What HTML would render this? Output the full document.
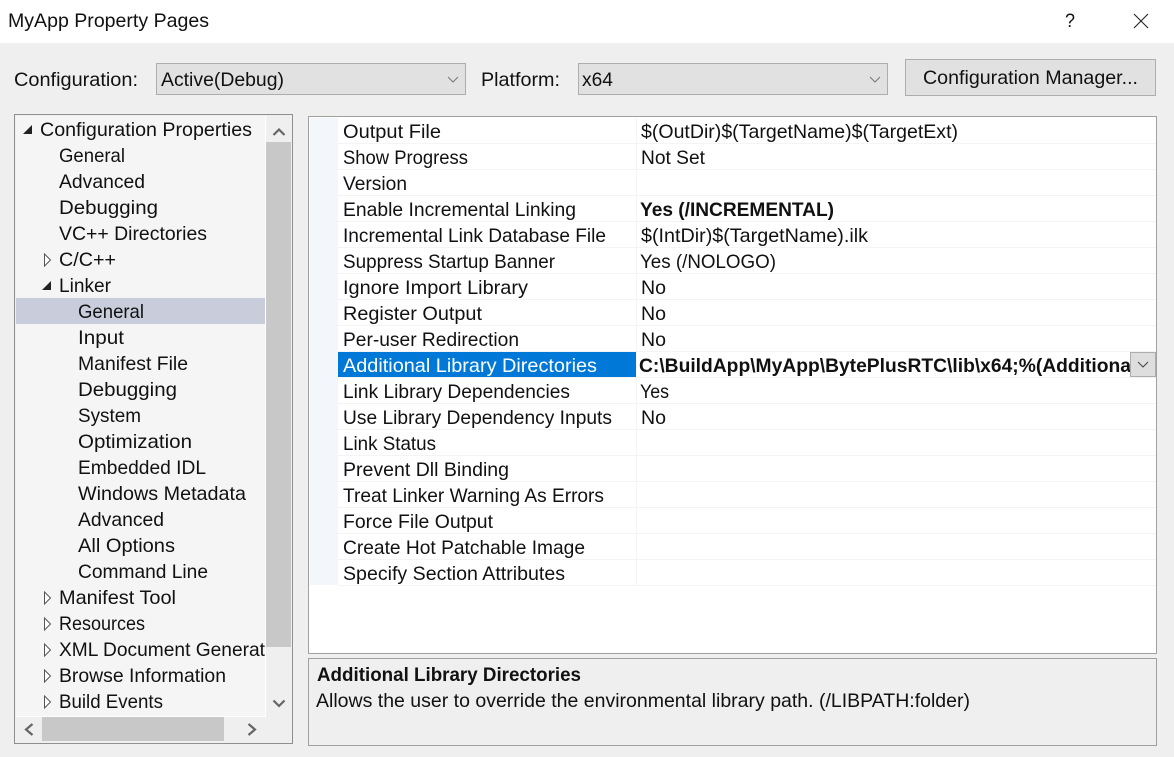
<!DOCTYPE html>
<html><head><meta charset="utf-8"><style>
html,body{margin:0;padding:0;background:#efefef;width:1174px;height:757px;overflow:hidden}
svg{display:block}
text{font-family:"Liberation Sans",sans-serif;font-size:19.5px;fill:#111}
.b{font-weight:bold}
</style></head><body>
<svg width="1174" height="757" viewBox="0 0 1174 757" xmlns="http://www.w3.org/2000/svg">
<rect width="1174" height="757" fill="#efefef"/>
<rect width="1174" height="43" fill="#fff"/>
<text x="8" y="27" textLength="201" lengthAdjust="spacingAndGlyphs">MyApp Property Pages</text>
<text x="1065" y="27" textLength="10" lengthAdjust="spacingAndGlyphs">?</text>
<path d="M1134 14L1148 28M1148 14L1134 28" stroke="#222" stroke-width="1.1" fill="none"/>

<text x="14" y="86" textLength="124" lengthAdjust="spacingAndGlyphs">Configuration:</text>
<rect x="156.500" y="63.500" width="309" height="31" fill="#e1e1e1" stroke="#adadad"/>
<text x="161" y="86" textLength="123" lengthAdjust="spacingAndGlyphs">Active(Debug)</text>
<path d="M448 77L453 82L458 77" stroke="#777" fill="none"/>
<text x="481" y="86" textLength="79" lengthAdjust="spacingAndGlyphs">Platform:</text>
<rect x="578.500" y="63.500" width="309" height="31" fill="#e1e1e1" stroke="#adadad"/>
<text x="582" y="86" textLength="31" lengthAdjust="spacingAndGlyphs">x64</text>
<path d="M870 77L875 82L880 77" stroke="#777" fill="none"/>
<rect x="905.500" y="59.500" width="250" height="36" fill="#e1e1e1" stroke="#adadad"/>
<text x="923" y="84" textLength="215" lengthAdjust="spacingAndGlyphs">Configuration Manager...</text>

<!-- tree -->
<rect x="14.500" y="114.500" width="278" height="629" fill="#efefef" stroke="#8f8f8f"/>
<rect x="16" y="116" width="249" height="600" fill="#f5f5f5"/>
<path d="M265.500 116V716.500H16" stroke="#fff" fill="none"/>
<rect x="16" y="298" width="249" height="26" fill="#c9ccdb"/>
<rect x="266" y="142" width="25" height="505" fill="#c8c8c8"/>
<rect x="42" y="717" width="182" height="24" fill="#c8c8c8"/>
<path d="M273.500 135L279 129.500L284.500 135M273.500 700.500L279 706L284.500 700.500" stroke="#666" stroke-width="2.2" fill="none"/>
<path d="M32.500 724L26 729.500L32.500 735M248.500 724L255 729.500L248.500 735" stroke="#666" stroke-width="2.2" fill="none"/>
<path d="M23 134L32 134L32 125Z" fill="#222"/>
<path d="M42 290L51 290L51 281Z" fill="#222"/>
<g fill="#fff" stroke="#555">
<path d="M44.500 254L50.500 260L44.500 266Z"/>
<path d="M44.500 592L50.500 598L44.500 604Z"/>
<path d="M44.500 618L50.500 624L44.500 630Z"/>
<path d="M44.500 644L50.500 650L44.500 656Z"/>
<path d="M44.500 670L50.500 676L44.500 682Z"/>
<path d="M44.500 696L50.500 702L44.500 708Z"/>
</g>
<text x="40" y="136" textLength="212" lengthAdjust="spacingAndGlyphs">Configuration Properties</text>
<text x="59" y="162" textLength="66" lengthAdjust="spacingAndGlyphs">General</text>
<text x="59" y="188" textLength="86" lengthAdjust="spacingAndGlyphs">Advanced</text>
<text x="59" y="214" textLength="99" lengthAdjust="spacingAndGlyphs">Debugging</text>
<text x="59" y="240" textLength="148" lengthAdjust="spacingAndGlyphs">VC++ Directories</text>
<text x="59" y="266" textLength="57" lengthAdjust="spacingAndGlyphs">C/C++</text>
<text x="59" y="292" textLength="52" lengthAdjust="spacingAndGlyphs">Linker</text>
<text x="78" y="318" textLength="66" lengthAdjust="spacingAndGlyphs">General</text>
<text x="78" y="344" textLength="46" lengthAdjust="spacingAndGlyphs">Input</text>
<text x="78" y="370" textLength="110" lengthAdjust="spacingAndGlyphs">Manifest File</text>
<text x="78" y="396" textLength="99" lengthAdjust="spacingAndGlyphs">Debugging</text>
<text x="78" y="422" textLength="63" lengthAdjust="spacingAndGlyphs">System</text>
<text x="78" y="448" textLength="114" lengthAdjust="spacingAndGlyphs">Optimization</text>
<text x="78" y="474" textLength="128" lengthAdjust="spacingAndGlyphs">Embedded IDL</text>
<text x="78" y="500" textLength="168" lengthAdjust="spacingAndGlyphs">Windows Metadata</text>
<text x="78" y="526" textLength="86" lengthAdjust="spacingAndGlyphs">Advanced</text>
<text x="78" y="552" textLength="97" lengthAdjust="spacingAndGlyphs">All Options</text>
<text x="78" y="578" textLength="130" lengthAdjust="spacingAndGlyphs">Command Line</text>
<text x="59" y="604" textLength="117" lengthAdjust="spacingAndGlyphs">Manifest Tool</text>
<text x="59" y="630" textLength="86" lengthAdjust="spacingAndGlyphs">Resources</text>
<text x="59" y="656" textLength="206" lengthAdjust="spacingAndGlyphs">XML Document Generat</text>
<text x="59" y="682" textLength="167" lengthAdjust="spacingAndGlyphs">Browse Information</text>
<text x="59" y="708" textLength="104" lengthAdjust="spacingAndGlyphs">Build Events</text>

<!-- grid -->
<rect x="308.500" y="116.500" width="848" height="537" fill="#fff" stroke="#a0a0a0"/>
<rect x="310" y="118" width="28" height="467" fill="#f3f6fb"/>
<g stroke="#f4f4f4">
<path d="M338 143.500H1156M338 169.500H1156M338 195.500H1156M338 221.500H1156M338 247.500H1156M338 273.500H1156M338 299.500H1156M338 325.500H1156M338 351.500H1156M338 377.500H1156M338 403.500H1156M338 429.500H1156M338 455.500H1156M338 481.500H1156M338 507.500H1156M338 533.500H1156M338 559.500H1156M338 585.500H1156"/>
<path d="M636.500 118V585"/>
</g>
<rect x="338" y="352" width="298" height="25" fill="#0078d7"/>
<text x="343" y="138" textLength="98" lengthAdjust="spacingAndGlyphs">Output File</text>
<text x="343" y="164" textLength="125" lengthAdjust="spacingAndGlyphs">Show Progress</text>
<text x="343" y="190" textLength="64" lengthAdjust="spacingAndGlyphs">Version</text>
<text x="343" y="216" textLength="233" lengthAdjust="spacingAndGlyphs">Enable Incremental Linking</text>
<text x="343" y="242" textLength="263" lengthAdjust="spacingAndGlyphs">Incremental Link Database File</text>
<text x="343" y="268" textLength="212" lengthAdjust="spacingAndGlyphs">Suppress Startup Banner</text>
<text x="343" y="294" textLength="185" lengthAdjust="spacingAndGlyphs">Ignore Import Library</text>
<text x="343" y="320" textLength="139" lengthAdjust="spacingAndGlyphs">Register Output</text>
<text x="343" y="346" textLength="176" lengthAdjust="spacingAndGlyphs">Per-user Redirection</text>
<text x="343" y="372" textLength="254" lengthAdjust="spacingAndGlyphs" style="fill:#fff">Additional Library Directories</text>
<text x="343" y="398" textLength="227" lengthAdjust="spacingAndGlyphs">Link Library Dependencies</text>
<text x="343" y="424" textLength="269" lengthAdjust="spacingAndGlyphs">Use Library Dependency Inputs</text>
<text x="343" y="450" textLength="93" lengthAdjust="spacingAndGlyphs">Link Status</text>
<text x="343" y="476" textLength="166" lengthAdjust="spacingAndGlyphs">Prevent Dll Binding</text>
<text x="343" y="502" textLength="261" lengthAdjust="spacingAndGlyphs">Treat Linker Warning As Errors</text>
<text x="343" y="528" textLength="150" lengthAdjust="spacingAndGlyphs">Force File Output</text>
<text x="343" y="554" textLength="242" lengthAdjust="spacingAndGlyphs">Create Hot Patchable Image</text>
<text x="343" y="580" textLength="222" lengthAdjust="spacingAndGlyphs">Specify Section Attributes</text>

<text x="641" y="138" textLength="317" lengthAdjust="spacingAndGlyphs">$(OutDir)$(TargetName)$(TargetExt)</text>
<text x="641" y="164" textLength="64" lengthAdjust="spacingAndGlyphs">Not Set</text>
<text x="640" y="216" textLength="194" lengthAdjust="spacingAndGlyphs" class="b">Yes (/INCREMENTAL)</text>
<text x="641" y="242" textLength="227" lengthAdjust="spacingAndGlyphs">$(IntDir)$(TargetName).ilk</text>
<text x="640" y="268" textLength="136" lengthAdjust="spacingAndGlyphs">Yes (/NOLOGO)</text>
<text x="641" y="294" textLength="25" lengthAdjust="spacingAndGlyphs">No</text>
<text x="641" y="320" textLength="25" lengthAdjust="spacingAndGlyphs">No</text>
<text x="641" y="346" textLength="25" lengthAdjust="spacingAndGlyphs">No</text>
<text x="639" y="372" textLength="492" lengthAdjust="spacingAndGlyphs" class="b">C:\BuildApp\MyApp\BytePlusRTC\lib\x64;%(Additiona</text>
<text x="640" y="398" textLength="29" lengthAdjust="spacingAndGlyphs">Yes</text>
<text x="641" y="424" textLength="25" lengthAdjust="spacingAndGlyphs">No</text>
<rect x="1130.500" y="352.500" width="25" height="24" fill="#dedede" stroke="#adadad"/>
<path d="M1138 362L1143 367L1148 362" stroke="#444" fill="none"/>

<!-- description -->
<rect x="308.500" y="658.500" width="848" height="87" fill="#efefef" stroke="#a0a0a0"/>
<text x="317" y="681" textLength="264" lengthAdjust="spacingAndGlyphs" class="b">Additional Library Directories</text>
<text x="316" y="707" textLength="654" lengthAdjust="spacingAndGlyphs">Allows the user to override the environmental library path. (/LIBPATH:folder)</text>
</svg>
</body></html>
